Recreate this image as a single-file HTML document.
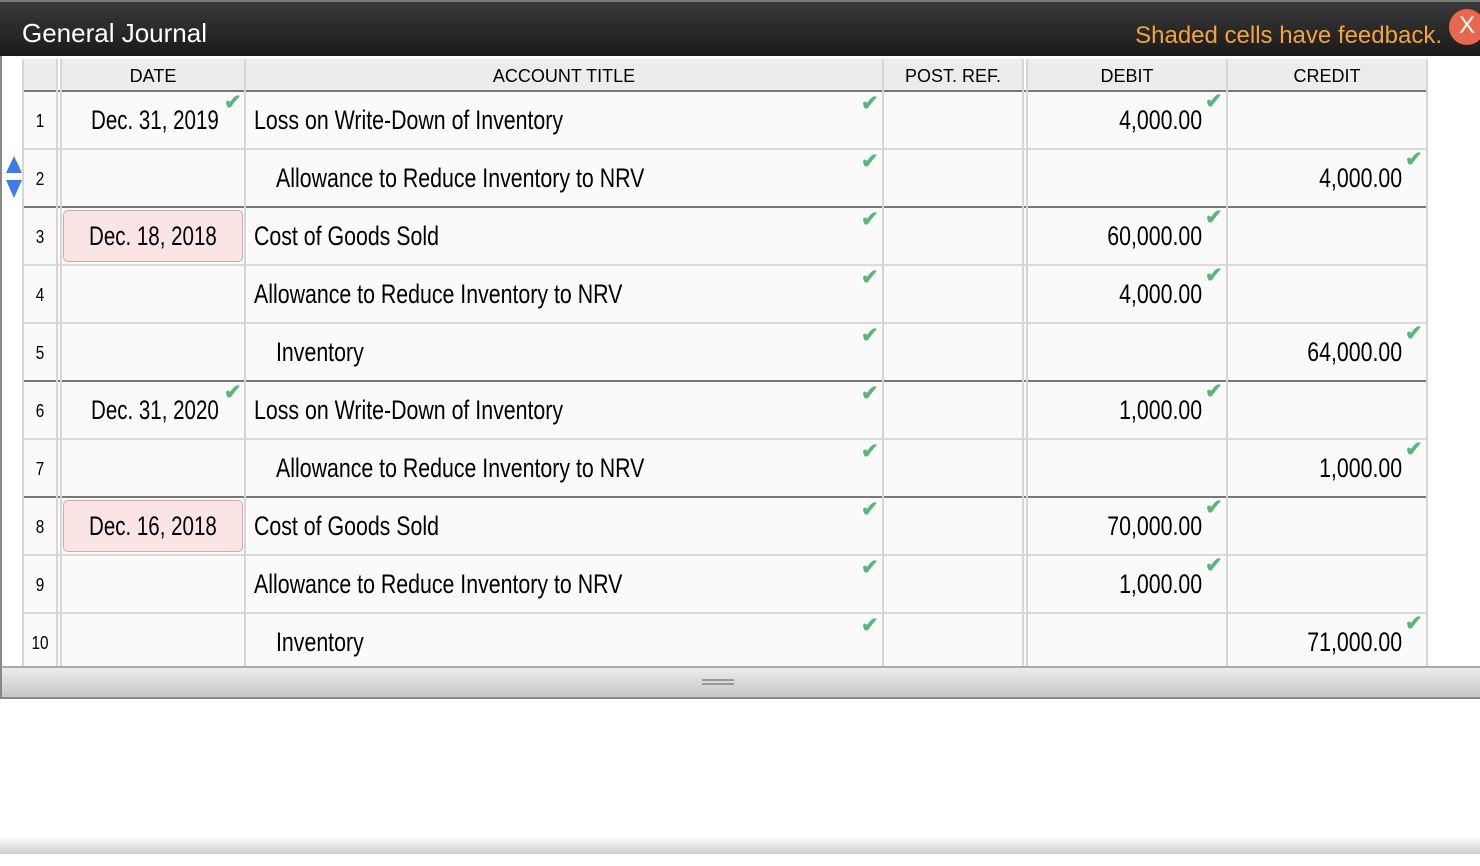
<!DOCTYPE html>
<html><head><meta charset="utf-8"><style>
body{margin:0;width:1480px;height:866px;background:#fff;position:relative;overflow:hidden;font-family:"Liberation Sans",sans-serif}
.hd{position:absolute;left:0;top:0;width:1480px;height:56px;background:linear-gradient(#3a3a3a,#1a1a1a);border-top:2px solid #777;box-sizing:border-box}
.ttl{position:absolute;left:22px;top:16px;color:#fff;font-size:26px}
.fb{position:absolute;right:38px;top:20px;color:#f2a33a;font-size:24px}
.x{position:absolute;left:1449px;top:9px;width:36px;height:36px;border-radius:50%;background:#e8684f;color:#fff;font-size:24px;text-align:center;line-height:34px}
.pn{position:absolute;left:0;top:56px;width:1480px;height:643px;border-left:2px solid #888;box-sizing:border-box}
.v{position:absolute;top:59px;height:607px;width:2px;background:#d6d6d6}
.h{position:absolute;left:23px;width:1404px;height:2px;background:#dadada}
.hk{position:absolute;left:23px;width:1404px;height:2px;background:#777}
.ch{position:absolute;top:59px;height:32px;background:#ececec;font-size:18px;text-align:center;line-height:34px}
.rb{position:absolute;left:23px;width:1404px;height:56px;background:#fafafa}
.n{position:absolute;left:23px;width:34px;text-align:center;font-size:18px;line-height:58px;height:58px}
.n span{display:inline-block;transform:scaleX(.85)}
.t{position:absolute;font-size:27px;line-height:58px;height:58px;white-space:nowrap}
.t span{display:inline-block;transform:scaleX(.79);transform-origin:left center}
.d span{transform:scaleX(.76)}
.r span{transform-origin:right center}
.r{text-align:right}
.c{position:absolute;color:#5cb57a;font-size:21px;font-weight:bold}
.pk{position:absolute;left:63px;width:178px;height:50px;background:#fbe4e4;border:1px solid #d9a4a4;border-radius:5px}
.ft{position:absolute;left:0;top:666px;width:1480px;height:33px;background:linear-gradient(#ececec,#c6c6c6);border-top:2px solid #aaa;border-bottom:2px solid #888;border-left:2px solid #888;box-sizing:border-box}
.gr{position:absolute;left:702px;top:679px;width:32px;height:6px;border-top:2px solid #999;border-bottom:2px solid #999;box-sizing:border-box}
.bt{position:absolute;left:0;top:836px;width:1480px;height:18px;background:linear-gradient(#fff,#d0d0d0)}
</style></head><body>
<div class="hd"><div class="ttl">General Journal</div><div class="fb">Shaded cells have feedback.</div></div>
<div class="x">X</div>
<div class="pn"></div>
<div class="ch" style="left:61px;width:184px">DATE</div>
<div class="ch" style="left:245px;width:638px">ACCOUNT TITLE</div>
<div class="ch" style="left:883px;width:140px">POST. REF.</div>
<div class="ch" style="left:1027px;width:200px">DEBIT</div>
<div class="ch" style="left:1227px;width:200px">CREDIT</div>
<div class="ch" style="left:23px;width:34px"></div>

<div class="rb" style="top:92px"></div><div class="rb" style="top:150px"></div><div class="rb" style="top:208px"></div><div class="rb" style="top:266px"></div><div class="rb" style="top:324px"></div><div class="rb" style="top:382px"></div><div class="rb" style="top:440px"></div><div class="rb" style="top:498px"></div><div class="rb" style="top:556px"></div><div class="rb" style="top:614px;height:52px"></div>

<div class="hk" style="top:90px"></div>
<div class="h" style="top:148px"></div><div class="hk" style="top:206px"></div><div class="h" style="top:264px"></div><div class="h" style="top:322px"></div><div class="hk" style="top:380px"></div><div class="h" style="top:438px"></div><div class="hk" style="top:496px"></div><div class="h" style="top:554px"></div><div class="h" style="top:612px"></div>

<div class="v" style="left:22px"></div><div class="v" style="left:56px"></div><div class="v" style="left:60px"></div><div class="v" style="left:244px"></div><div class="v" style="left:882px"></div><div class="v" style="left:1022px"></div><div class="v" style="left:1026px"></div><div class="v" style="left:1226px"></div><div class="v" style="left:1426px"></div>

<div class="pk" style="top:210px"></div><div class="pk" style="top:500px"></div>

<svg style="position:absolute;left:5px;top:154px" width="18" height="46"><path d="M9 2 L17 19 L1 19Z" fill="#3b7de8"/><path d="M1 26 L17 26 L9 44Z" fill="#3b7de8"/></svg>

<div class="n" style="top:92px"><span>1</span></div><div class="n" style="top:150px"><span>2</span></div><div class="n" style="top:208px"><span>3</span></div><div class="n" style="top:266px"><span>4</span></div><div class="n" style="top:324px"><span>5</span></div><div class="n" style="top:382px"><span>6</span></div><div class="n" style="top:440px"><span>7</span></div><div class="n" style="top:498px"><span>8</span></div><div class="n" style="top:556px"><span>9</span></div><div class="n" style="top:614px"><span>10</span></div>

<div class="t d" style="left:91px;top:91px"><span>Dec. 31, 2019</span></div>
<div class="t d" style="left:89px;top:207px"><span>Dec. 18, 2018</span></div>
<div class="t d" style="left:91px;top:381px"><span>Dec. 31, 2020</span></div>
<div class="t d" style="left:89px;top:497px"><span>Dec. 16, 2018</span></div>

<div class="t" style="left:254px;top:91px"><span>Loss on Write-Down of Inventory</span></div>
<div class="t" style="left:276px;top:149px"><span>Allowance to Reduce Inventory to NRV</span></div>
<div class="t" style="left:254px;top:207px"><span>Cost of Goods Sold</span></div>
<div class="t" style="left:254px;top:265px"><span>Allowance to Reduce Inventory to NRV</span></div>
<div class="t" style="left:276px;top:323px"><span>Inventory</span></div>
<div class="t" style="left:254px;top:381px"><span>Loss on Write-Down of Inventory</span></div>
<div class="t" style="left:276px;top:439px"><span>Allowance to Reduce Inventory to NRV</span></div>
<div class="t" style="left:254px;top:497px"><span>Cost of Goods Sold</span></div>
<div class="t" style="left:254px;top:555px"><span>Allowance to Reduce Inventory to NRV</span></div>
<div class="t" style="left:276px;top:613px"><span>Inventory</span></div>

<div class="t r" style="right:278px;top:91px"><span>4,000.00</span></div>
<div class="t r" style="right:78px;top:149px"><span>4,000.00</span></div>
<div class="t r" style="right:278px;top:207px"><span>60,000.00</span></div>
<div class="t r" style="right:278px;top:265px"><span>4,000.00</span></div>
<div class="t r" style="right:78px;top:323px"><span>64,000.00</span></div>
<div class="t r" style="right:278px;top:381px"><span>1,000.00</span></div>
<div class="t r" style="right:78px;top:439px"><span>1,000.00</span></div>
<div class="t r" style="right:278px;top:497px"><span>70,000.00</span></div>
<div class="t r" style="right:278px;top:555px"><span>1,000.00</span></div>
<div class="t r" style="right:78px;top:613px"><span>71,000.00</span></div>

<div class="c" style="left:224px;top:90px">✔</div><div class="c" style="left:224px;top:380px">✔</div>
<div class="c" style="left:861px;top:91px">✔</div><div class="c" style="left:861px;top:149px">✔</div><div class="c" style="left:861px;top:207px">✔</div><div class="c" style="left:861px;top:265px">✔</div><div class="c" style="left:861px;top:323px">✔</div><div class="c" style="left:861px;top:381px">✔</div><div class="c" style="left:861px;top:439px">✔</div><div class="c" style="left:861px;top:497px">✔</div><div class="c" style="left:861px;top:555px">✔</div><div class="c" style="left:861px;top:613px">✔</div>
<div class="c" style="left:1205px;top:89px">✔</div><div class="c" style="left:1205px;top:205px">✔</div><div class="c" style="left:1205px;top:263px">✔</div><div class="c" style="left:1205px;top:379px">✔</div><div class="c" style="left:1205px;top:495px">✔</div><div class="c" style="left:1205px;top:553px">✔</div>
<div class="c" style="left:1405px;top:147px">✔</div><div class="c" style="left:1405px;top:321px">✔</div><div class="c" style="left:1405px;top:437px">✔</div><div class="c" style="left:1405px;top:611px">✔</div>

<div class="ft"></div><div class="gr"></div>
<div class="bt"></div>
</body></html>
